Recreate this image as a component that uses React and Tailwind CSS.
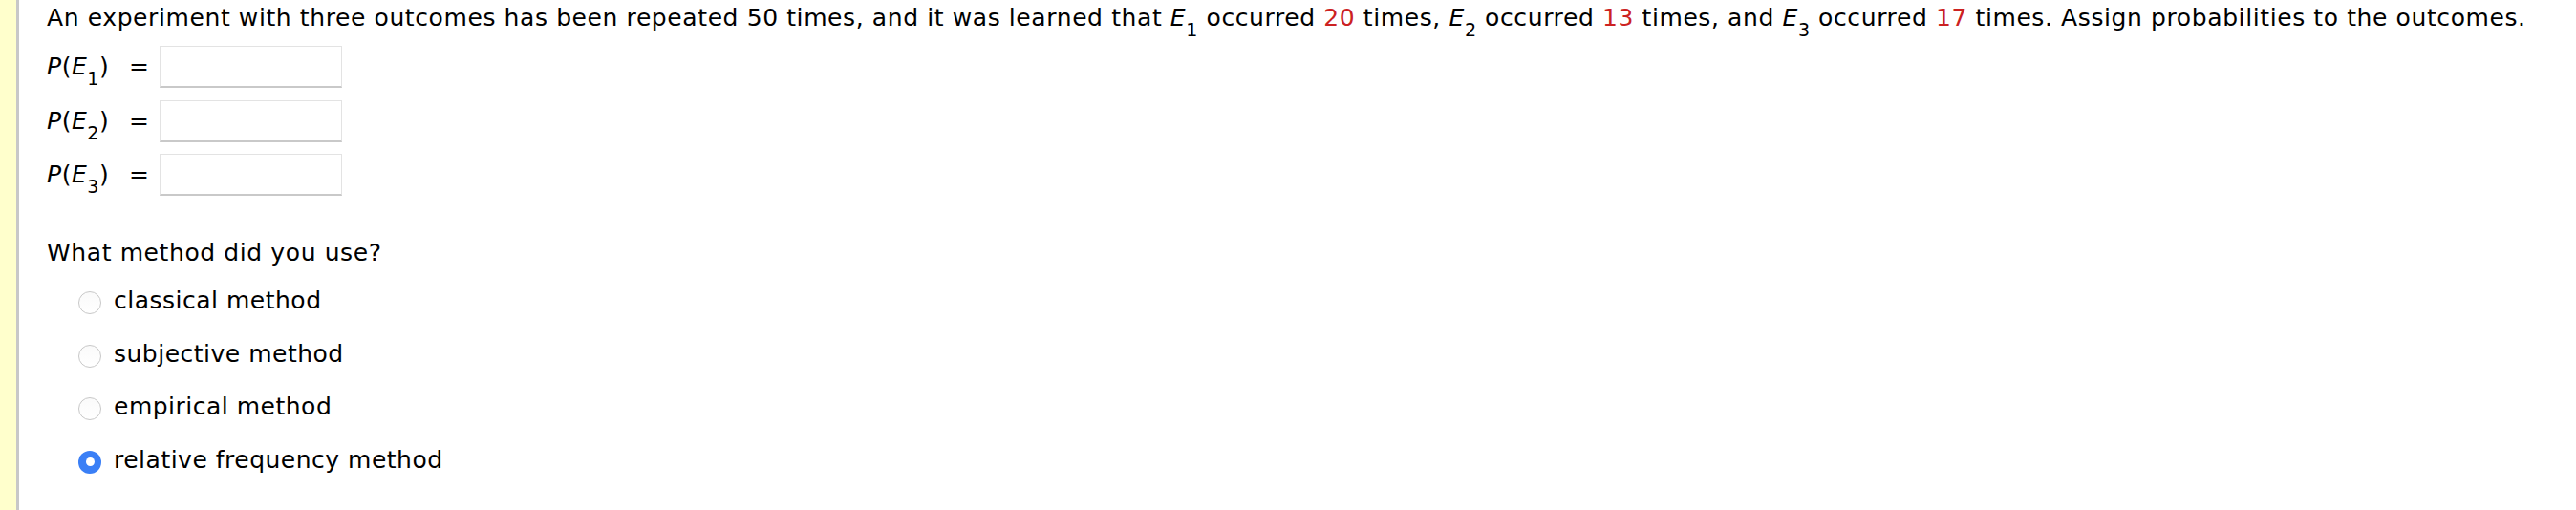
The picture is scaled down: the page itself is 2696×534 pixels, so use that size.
import React from "react";

const font = { fontFamily: '"DejaVu Sans", Verdana, sans-serif' };

function Sub({ children }) {
  return (
    <span className="relative top-[11px] text-[19px] leading-none not-italic">{children}</span>
  );
}

function Red({ children }) {
  return <span className="text-[#cc2222]">{children}</span>;
}

function PRow({ n }) {
  return (
    <div className="flex h-[44px] items-center">
      <div className="w-[86px] whitespace-nowrap text-[25px] leading-[28px] tracking-[0.55px]">
        <i>P</i>(<i>E</i>
        <Sub>{n}</Sub>)
      </div>
      <div className="w-[32px] text-[25px] leading-[28px]">=</div>
      <div className="h-[44px] w-[191px] border border-[#e3e3e3] border-b-2 border-b-[#c9c9c9] bg-white" />
    </div>
  );
}

function Radio({ label, checked }) {
  return (
    <div className="flex h-[28px] items-start">
      {checked ? (
        <div className="ml-[33px] mt-[4px] flex h-[24px] w-[24px] shrink-0 items-center justify-center rounded-full bg-[#3a7ff6]">
          <div className="h-[9px] w-[9px] rounded-full bg-white" />
        </div>
      ) : (
        <div className="ml-[33px] mt-[4px] h-[24px] w-[24px] shrink-0 rounded-full border border-[#c8c8c8] bg-gradient-to-b from-[#fafafa] to-white" />
      )}
      <div className="ml-[13px] whitespace-nowrap text-[25px] leading-[28px] tracking-[0.5px]">{label}</div>
    </div>
  );
}

export default function App() {
  return (
    <div className="flex h-[534px] w-full bg-white text-black" style={font}>
      <div className="w-[17px] shrink-0 bg-[#ffffcc]" />
      <div className="w-[3px] shrink-0 bg-[#c8c8c8]" />
      <div className="flex-1 pl-[29px] pt-[5px]">
        <div className="whitespace-nowrap text-[25px] leading-[28px] tracking-[0.6px]">
          An experiment with three outcomes has been repeated 50 times, and it was learned that <i>E</i>
          <Sub>1</Sub> occurred <Red>20</Red> times, <i>E</i>
          <Sub>2</Sub> occurred <Red>13</Red> times, and <i>E</i>
          <Sub>3</Sub> occurred <Red>17</Red> times. Assign probabilities to the outcomes.
        </div>
        <div className="mt-[15px] flex flex-col gap-[12.5px]">
          <PRow n="1" />
          <PRow n="2" />
          <PRow n="3" />
        </div>
        <div className="mt-[46px] text-[25px] leading-[28px] tracking-[0.6px]">What method did you use?</div>
        <div className="mt-[22px] flex flex-col gap-[27.5px]">
          <Radio label="classical method" />
          <Radio label="subjective method" />
          <Radio label="empirical method" />
          <Radio label="relative frequency method" checked />
        </div>
      </div>
    </div>
  );
}
